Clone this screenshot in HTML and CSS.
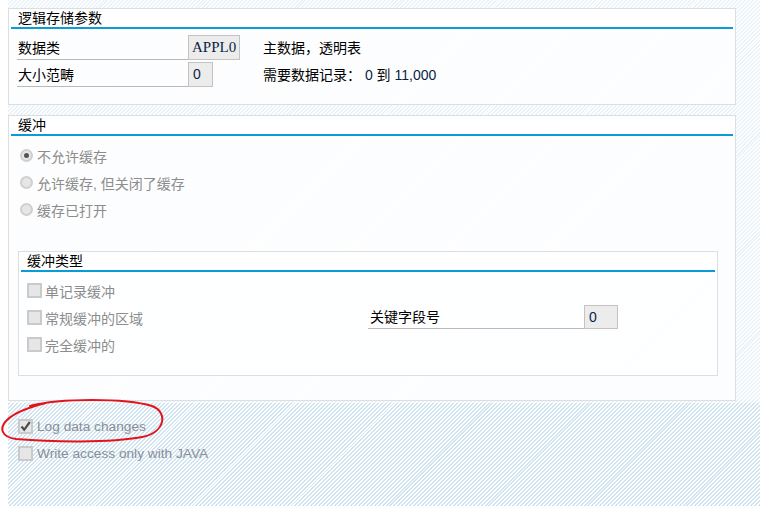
FILE: index.html
```html
<!DOCTYPE html>
<html lang="zh">
<head>
    <meta charset="UTF-8">
    <title>Technical Settings</title>
    <link rel="stylesheet" href="styles.css">
</head>
<body>
    <div class="screen">
        <div class="upper">
            <section class="group group-storage">
                <div class="group-head"><div class="group-title">逻辑存储参数</div></div>
                <div class="storage-body">
                    <div class="field-row">
                        <span class="field-label">数据类</span>
                        <span class="field-cell"><span class="field-value value-code">APPL0</span></span>
                        <span class="field-note">主数据，透明表</span>
                    </div>
                    <div class="field-row">
                        <span class="field-label">大小范畴</span>
                        <span class="field-cell"><span class="field-value value-small">0</span></span>
                        <span class="field-note">需要数据记录： <span class="num">0</span> 到 <span class="num">11,000</span></span>
                    </div>
                </div>
            </section>

            <section class="group group-buffer">
                <div class="group-head"><div class="group-title">缓冲</div></div>
                <div class="buffer-body">
                    <div class="radio-list">
                        <div class="choice"><span class="radio checked"></span><span class="choice-text">不允许缓存</span></div>
                        <div class="choice"><span class="radio"></span><span class="choice-text">允许缓存, 但关闭了缓存</span></div>
                        <div class="choice"><span class="radio"></span><span class="choice-text">缓存已打开</span></div>
                    </div>

                    <section class="subgroup">
                        <div class="group-head"><div class="group-title sub-title">缓冲类型</div></div>
                        <div class="subgroup-body">
                            <div class="choice"><span class="check"></span><span class="choice-text">单记录缓冲</span></div>
                            <div class="choice"><span class="check"></span><span class="choice-text">常规缓冲的区域</span></div>
                            <div class="choice"><span class="check"></span><span class="choice-text">完全缓冲的</span></div>
                            <div class="key-field">
                                <span class="key-label">关键字段号</span>
                                <span class="field-value value-key">0</span>
                            </div>
                        </div>
                    </section>
                </div>
            </section>
        </div>

        <div class="options">
            <div class="choice">
                <span class="check">
                    <svg width="11" height="11" viewBox="0 0 11 11"><path d="M1.5 5.5 L4.2 8.8 L9.8 1" fill="none" stroke="#4d4d4d" stroke-width="2.2"/></svg>
                </span>
                <span class="choice-text latin">Log data changes</span>
            </div>
            <div class="choice">
                <span class="check"></span>
                <span class="choice-text latin">Write access only with JAVA</span>
            </div>
        </div>
    </div>

    <!-- red hand-drawn mark around the log option -->
    <svg class="markup" width="760" height="506" viewBox="0 0 760 506">
        <path d="M30 406 C60 398 125 398 152 406 C168 412 166 432 142 437 C110 443 52 442 16 439 C1 437 -1 428 7 420 C14 413 26 408 46 403" fill="none" stroke="#e3131b" stroke-width="2" stroke-linecap="round"/>
    </svg>
</body>
</html>
```

FILE: styles.css
```css
/* SAP-like technical settings screen */
body {
    margin: 0;
    position: relative;
    width: 760px;
    height: 506px;
    overflow: hidden;
    background-color: #fff;
    font-family: "Liberation Sans", "Noto Sans CJK SC", sans-serif;
    font-size: 14px;
    color: #000;
}
.screen {
    margin-left: 8px;
    height: 506px;
    background: repeating-linear-gradient(135deg, #cfe3f1 0 1.4px, #fff 1.4px 2.8px);
}
.upper {
    padding-top: 8px;
    height: 395px;
    background-color: rgba(255, 255, 255, 0.55);
}
.group {
    width: 726px;
    border: 1px solid #dcdfe2;
    background-color: rgba(255, 255, 255, 0.78);
}
.group-head {
    background-color: #fff;
    padding: 0 2px;
}
.group-title {
    height: 18px;
    line-height: 18px;
    padding-left: 7px;
    border-bottom: 2px solid #0a9bd9;
}
.storage-body {
    padding: 6px 0 17px 8px;
    display: flex;
    flex-direction: column;
    gap: 2px;
}
.field-row {
    display: flex;
    align-items: flex-end;
    height: 25px;
}
.field-label {
    width: 170px;
    padding-left: 1px;
    line-height: 22px;
    border-bottom: 1px solid #b9b9b9;
}
.field-cell {
    width: 75px;
    display: flex;
}
.field-value {
    display: block;
    box-sizing: border-box;
    height: 25px;
    line-height: 23px;
    padding-left: 4px;
    border: 1px solid #c3c3c3;
    background-color: #ececec;
    color: #0b1f44;
    font-family: "Liberation Sans", sans-serif;
    font-size: 14px;
}
.value-code {
    width: 52px;
    font-family: "Liberation Serif", serif;
    font-size: 15px;
    padding-left: 3px;
}
.value-small {
    width: 25px;
}
.field-note {
    line-height: 25px;
    position: relative;
    top: 1px;
}
.num {
    font-size: 14px;
    color: #0b1f44;
}
.group-buffer {
    margin-top: 10px;
    height: 284px;
}
.buffer-body {
    padding: 6px 0 0 9px;
}
.radio-list {
    padding-left: 2px;
    margin-bottom: 28px;
}
.choice {
    display: flex;
    align-items: center;
    height: 27px;
    color: #8c8c8c;
}
.radio {
    box-sizing: border-box;
    width: 13px;
    height: 13px;
    border-radius: 50%;
    border: 2px solid #cfcfcf;
    background-color: #e6e6e6;
    margin-right: 4px;
    display: flex;
    align-items: center;
    justify-content: center;
}
.radio.checked::after {
    content: "";
    width: 5px;
    height: 5px;
    border-radius: 50%;
    background-color: #555;
}
.subgroup {
    width: 698px;
    height: 123px;
    border: 1px solid #dcdfe2;
    background-color: rgba(255, 255, 255, 0.6);
}
.sub-title {
    padding-left: 6px;
}
.subgroup-body {
    display: grid;
    grid-template-columns: 341px 1fr;
    grid-template-rows: repeat(3, 27px);
    grid-auto-flow: column;
    padding: 5px 0 0 8px;
}
.check {
    box-sizing: border-box;
    width: 15px;
    height: 15px;
    border: 2px solid #cacaca;
    background-color: #e6e6e6;
    margin-right: 3px;
    display: flex;
    align-items: center;
    justify-content: center;
}
.key-field {
    grid-column: 2;
    grid-row: 2;
    align-self: end;
    margin-bottom: 2px;
    display: flex;
    align-items: flex-end;
}
.key-label {
    width: 214px;
    padding-left: 2px;
    line-height: 22px;
    border-bottom: 1px solid #b9b9b9;
}
.value-key {
    width: 34px;
    height: 24px;
    line-height: 22px;
}
.options {
    padding: 10px 0 0 10px;
}
.latin {
    font-size: 13.7px;
    color: #8a8e97;
    margin-left: 1px;
}
.markup {
    position: absolute;
    left: 0;
    top: 0;
    pointer-events: none;
}
```
